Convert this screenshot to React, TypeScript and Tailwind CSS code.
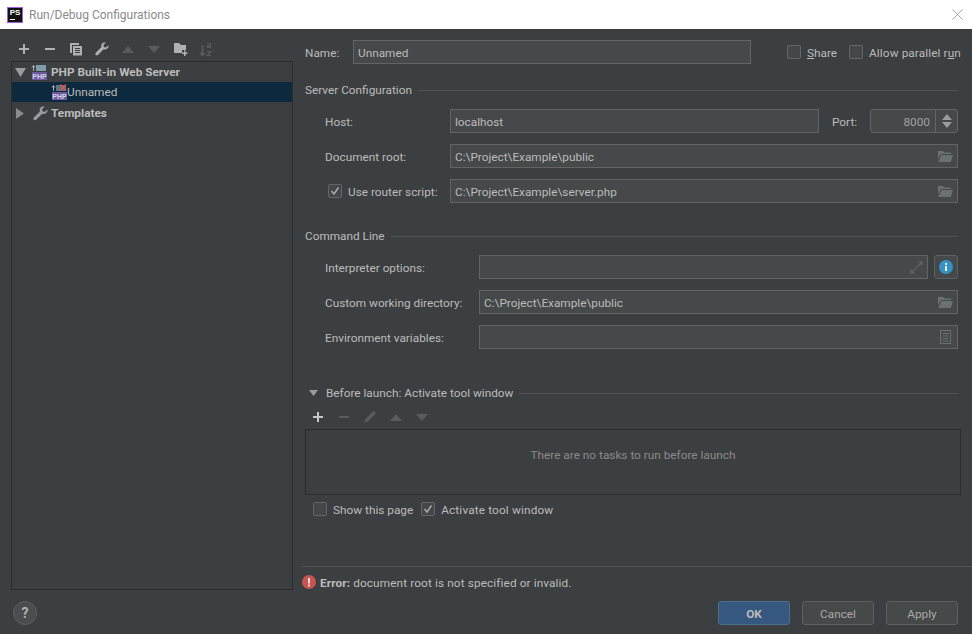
import type { ReactNode } from 'react'

const icon = '#afb1b3'
const dim = '#595c5e'

function Plus({ color = icon }: { color?: string }) {
  return (
    <svg width="12" height="12" viewBox="0 0 12 12"><path d="M5 1h2v4h4v2H7v4H5V7H1V5h4z" fill={color} /></svg>
  )
}

function Minus({ color = icon }: { color?: string }) {
  return (
    <svg width="12" height="12" viewBox="0 0 12 12"><rect x="1" y="5" width="10" height="2" fill={color} /></svg>
  )
}

function Copy() {
  return (
    <svg width="14" height="14" viewBox="0 0 14 14" fill="none">
      <path d="M1 1h9v2H3v8H1z" fill={icon} />
      <path d="M4 4h9v9.500H4z" fill={icon} />
      <path d="M6 6.500h5M6 8.500h5M6 10.500h5" stroke="#3c3f41" strokeWidth="1" />
    </svg>
  )
}

function Wrench({ size = 14, color = icon }: { size?: number; color?: string }) {
  return (
    <svg width={size} height={size} viewBox="0 0 14 14">
      <path d="M13.500 3.200l-2.600 2.300-2-.5-.5-2L11 .6C9.500.1 7.800.500 6.900 1.700 6.100 2.800 6 4 6.500 5.100L.8 10.800c-.6.600-.6 1.500 0 2.100.6.600 1.500.6 2.100 0l5.700-5.700c1.200.5 2.500.3 3.600-.6 1.200-1 1.500-2.100 1.300-3.400z" fill={color} />
    </svg>
  )
}

function Triangle({ up, color = dim }: { up?: boolean; color?: string }) {
  return (
    <svg width="12" height="7" viewBox="0 0 12 7">
      <path d={up ? 'M6 0l6 7H0z' : 'M0 0h12L6 7z'} fill={color} />
    </svg>
  )
}

function NewFolder() {
  return (
    <svg width="15" height="14" viewBox="0 0 15 14">
      <path d="M1 1h5l2 2h5v5H9v3H1z" fill={icon} />
      <path d="M11 8.500h1.500v2h2V12h-2v2H11v-2H9v-1.500h2z" fill={icon} />
    </svg>
  )
}

function Sort() {
  return (
    <svg width="14" height="15" viewBox="0 0 14 15" fill="none">
      <path d="M3.500 3v10M1 10.500l2.500 3 2.500-3" stroke={dim} strokeWidth="1.500" />
      <path d="M8 1.500h3.500v4H8.500V3.800h3M8 9.500h4l-4 4h4" stroke={dim} strokeWidth="1.200" />
    </svg>
  )
}

function PhpIcon({ broken }: { broken?: boolean }) {
  return (
    <svg width="16" height="16" viewBox="0 0 16 16" className="shrink-0">
      <path d="M2.500 7V2M1 3.500l1.500-2 1.500 2" stroke="#afb1b3" fill="none" strokeWidth="1" />
      <rect x="5" y="1" width="10" height="6" fill={broken ? '#5f7580' : '#7f9ca8'} />
      <rect x="1" y="8" width="15" height="8" fill="#6a5a9c" />
      <text x="8.500" y="14.700" textAnchor="middle" fontSize="7" fontWeight="700" fontFamily="Liberation Sans, sans-serif" fill="#d6d3e8">PHP</text>
      {broken && <path d="M9.500 0.500l5.500 6M15 0.500l-5.500 6" stroke="#d9534f" strokeWidth="1.500" />}
    </svg>
  )
}

function FolderOpen() {
  return (
    <svg width="15" height="13" viewBox="0 0 15 13">
      <path d="M0 1h5l1.500 1.500H13V4H3L0 9z" fill="#6b7072" />
      <path d="M3.500 5H15l-2.200 7H0z" fill="#6b7072" />
    </svg>
  )
}

function Expand() {
  return (
    <svg width="13" height="13" viewBox="0 0 13 13" fill="none">
      <path d="M7 6l5-5M8.500 1H12v3.500" stroke="#5f6364" strokeWidth="1.500" />
      <path d="M6 7l-5 5M1 8.500V12h3.500" stroke="#5f6364" strokeWidth="1.500" />
    </svg>
  )
}

function Note() {
  return (
    <svg width="11" height="14" viewBox="0 0 11 14" fill="none" className="mr-[2px]">
      <rect x="0.500" y="0.500" width="10" height="13" stroke="#6b7072" />
      <path d="M2.500 3.500h6M2.500 6h6M2.500 8.500h6M2.500 11h6" stroke="#6b7072" />
    </svg>
  )
}

function Check({ checked, className = '' }: { checked?: boolean; className?: string }) {
  return (
    <div className={`flex h-[14px] w-[14px] shrink-0 items-center justify-center rounded-[2px] border border-[#636566] bg-[#43474a] ${className}`}>
      {checked && (
        <svg width="10" height="10" viewBox="0 0 10 10" fill="none">
          <path d="M1.500 5l2.500 3L8.500 1.500" stroke="#a9abad" strokeWidth="1.500" />
        </svg>
      )}
    </div>
  )
}

function Field({ value, children, className = '' }: { value?: string; children?: ReactNode; className?: string }) {
  return (
    <div className={`flex h-[24px] shrink-0 items-center justify-between border border-[#646464] bg-[#45494a] pl-[4px] pr-[4px] ${className}`}>
      <span className="text-[#bbbbbb]">{value}</span>
      {children}
    </div>
  )
}

function Heading({ title, className = '' }: { title: string; className?: string }) {
  return (
    <div className={`flex h-[16px] items-center gap-[6px] ${className}`}>
      <div>{title}</div>
      <div className="h-px flex-1 bg-[#505254]" />
    </div>
  )
}

function Button({ label, primary }: { label: string; primary?: boolean }) {
  return (
    <div
      className={`flex h-[24px] w-[72px] items-center justify-center rounded-[3px] border pt-[2px] ${
        primary
          ? 'border-[#4c708c] bg-[#365880] font-bold text-[#bbbbbb]'
          : 'border-[#5e6060] bg-[#45494a] text-[#a9a9a9]'
      }`}
    >
      {label}
    </div>
  )
}

export default function App() {
  return (
    <div className="flex h-[634px] w-[972px] flex-col overflow-hidden bg-[#3c3f41] font-['Roboto','Noto_Sans',sans-serif] text-[11.8px] leading-[16px] text-[#bbbbbb] [&_span]:pt-[2px]">
      {/* Title bar */}
      <div className="flex h-[29px] shrink-0 items-center justify-between bg-white pl-[7px] pr-[9px]">
        <div className="flex items-center gap-[6px]">
          <div className="relative flex h-[16px] w-[16px] items-start justify-center border border-[#a05fe0] bg-[#111111] font-['Liberation_Sans',sans-serif] text-[8px] font-bold leading-[10px] text-white">
            PS
            <div className="absolute bottom-[2px] left-[2px] h-px w-[5px] bg-white" />
          </div>
          <div className="text-[12px] text-[#8a8a8a]">Run/Debug Configurations</div>
        </div>
        <svg width="11" height="11" viewBox="0 0 11 11" fill="none">
          <path d="M.5.500l10 10M10.500.500l-10 10" stroke="#8c8c8c" strokeWidth="0.800" />
        </svg>
      </div>

      <div className="flex min-h-0 flex-1">
        {/* Left: toolbar + tree */}
        <div className="flex w-[301px] shrink-0 flex-col pl-[11px]">
          <div className="flex h-[32px] shrink-0 items-center pt-[8px]">
            {[<Plus />, <Minus />, <Copy />, <Wrench />, <Triangle up />, <Triangle />, <NewFolder />, <Sort />].map((ic, i) => (
              <div key={i} className="flex w-[26px] justify-center">{ic}</div>
            ))}
          </div>
          <div className="h-[529px] w-[282px] border border-[#2b2b2b] font-bold">
            <div className="flex h-[20px] items-center">
              <div className="ml-[3px] mr-[5px] w-[11px]">
                <svg width="11" height="9" viewBox="0 0 11 9"><path d="M0 0h11L5.500 9z" fill="#9a9c9e" /></svg>
              </div>
              <PhpIcon />
              <div className="ml-[4px]">PHP Built-in Web Server</div>
            </div>
            <div className="flex h-[20px] items-center bg-[#0d293e] pl-[39px] font-normal">
              <PhpIcon broken />
              <div>Unnamed</div>
            </div>
            <div className="mt-[1px] flex h-[20px] items-center">
              <div className="ml-[4px] mr-[5px] w-[10px]">
                <svg width="8" height="11" viewBox="0 0 8 11"><path d="M0 0l8 5.500L0 11z" fill="#8a8c8e" /></svg>
              </div>
              <div className="ml-[2px] mr-[3px]"><Wrench size={15} color="#9a9c9e" /></div>
              <div>Templates</div>
            </div>
          </div>
        </div>

        {/* Right: form */}
        <div className="flex min-w-0 flex-1 flex-col pl-[4px] pr-[14px]">
          <div className="mt-[11px] flex h-[24px] items-center">
            <span className="w-[48px] shrink-0">Name:</span>
            <Field value="Unnamed" className="w-[398px]" />
            <Check className="ml-[36px]" />
            <span className="ml-[6px]"><u>S</u>hare</span>
            <Check className="ml-[12px]" />
            <span className="ml-[6px] whitespace-nowrap tracking-[0.1px]">Allow parallel r<u>u</u>n</span>
          </div>

          <Heading title="Server Configuration" className="mt-[18px]" />
          <div className="mt-[11px] flex flex-col gap-[11px] pl-[20px]">
            <div className="flex items-center">
              <span className="w-[125px]">Host:</span>
              <Field value="localhost" className="w-[369px]" />
              <span className="ml-[13px] w-[38px]">Port:</span>
              <div className="flex h-[24px] w-[88px] items-center rounded-[3px] border border-[#646464] bg-[#45494a]">
                <span className="flex-1 pr-[5px] text-right text-[#a0a0a0]">8000</span>
                <div className="flex h-full w-[22px] flex-col items-center justify-center gap-[2px] border-l border-[#646464]">
                  <svg width="10" height="6" viewBox="0 0 10 6"><path d="M5 0l5 6H0z" fill="#9a9c9e" /></svg>
                  <svg width="10" height="6" viewBox="0 0 10 6"><path d="M0 0h10L5 6z" fill="#9a9c9e" /></svg>
                </div>
              </div>
            </div>
            <div className="flex items-center">
              <span className="w-[125px]">Document root:</span>
              <Field value="C:\Project\Example\public" className="flex-1"><FolderOpen /></Field>
            </div>
            <div className="flex items-center">
              <Check checked className="ml-[3px]" />
              <span className="ml-[6px] w-[102px]">Use router script:</span>
              <Field value="C:\Project\Example\server.php" className="flex-1"><FolderOpen /></Field>
            </div>
          </div>

          <Heading title="Command Line" className="mt-[25px]" />
          <div className="mt-[11px] flex flex-col gap-[11px] pl-[20px]">
            <div className="flex items-center">
              <span className="w-[154px]">Interpreter options:</span>
              <Field className="flex-1"><Expand /></Field>
              <div className="ml-[6px] flex h-[24px] w-[24px] items-center justify-center rounded-[3px] border border-[#5e6060] bg-[#45494a]">
                <svg width="14" height="14" viewBox="0 0 14 14">
                  <circle cx="7" cy="7" r="7" fill="#3592c4" />
                  <rect x="6" y="6" width="2" height="5" fill="#e8eef2" />
                  <rect x="6" y="3" width="2" height="2" fill="#e8eef2" />
                </svg>
              </div>
            </div>
            <div className="flex items-center">
              <span className="w-[154px]">Custom working directory:</span>
              <Field value="C:\Project\Example\public" className="flex-1"><FolderOpen /></Field>
            </div>
            <div className="flex items-center">
              <span className="w-[154px]">Environment variables:</span>
              <Field className="flex-1"><Note /></Field>
            </div>
          </div>

          <div className="mt-[36px] flex h-[16px] items-center">
            <svg width="9" height="6" viewBox="0 0 9 6" className="ml-[4px]"><path d="M0 0h9L4.500 6z" fill="#9a9c9e" /></svg>
            <div className="ml-[8px]">Before launch: Activate tool window</div>
            <div className="ml-[6px] h-px flex-1 bg-[#505254]" />
          </div>
          <div className="mt-[10px] flex h-[12px] items-center">
            {[<Plus color="#c4c6c8" />, <Minus color={dim} />].map((ic, i) => (
              <div key={i} className="flex w-[26px] justify-center">{ic}</div>
            ))}
            <div className="flex w-[26px] justify-center">
              <svg width="14" height="14" viewBox="0 0 14 14"><path d="M10.500 1l2.500 2.500-8 8L1 13l1.500-4z" fill={dim} /></svg>
            </div>
            <div className="flex w-[26px] justify-center"><Triangle up /></div>
            <div className="flex w-[26px] justify-center"><Triangle /></div>
          </div>
          <div className="mt-[6px] mr-[-3px] flex h-[66px] shrink-0 items-center justify-center border border-[#2b2b2b] pb-[14px] text-[#8a8a8a]">
            There are no tasks to run before launch
          </div>
          <div className="mt-[7px] flex h-[14px] items-center pl-[8px]">
            <Check />
            <span className="ml-[6px]">Show this page</span>
            <Check checked className="ml-[8px]" />
            <span className="ml-[6px] tracking-[0.15px]">Activate tool window</span>
          </div>

          <div className="mt-[50px] ml-[-4px] mr-[-14px] h-px shrink-0 bg-[#505254]" />
          <div className="mt-[7px] flex h-[16px] items-center">
            <svg width="14" height="14" viewBox="0 0 14 14" className="ml-[-3px]">
              <circle cx="7" cy="7" r="7" fill="#c75450" />
              <rect x="6" y="3" width="2" height="5.500" fill="#f2dede" />
              <rect x="6" y="9.500" width="2" height="2" fill="#f2dede" />
            </svg>
            <span className="ml-[4px] tracking-[0.12px]"><b>Error:</b> document root is not specified or invalid.</span>
          </div>
        </div>
      </div>

      {/* Footer */}
      <div className="flex h-[33px] shrink-0 items-start justify-between pl-[13px] pr-[14px]">
        <div className="flex h-[24px] w-[24px] items-center justify-center rounded-full border border-[#5e6060] bg-[#4a4d4f] text-[14px] font-bold text-[#b0b0b0]">?</div>
        <div className="flex gap-[12px]">
          <Button label="OK" primary />
          <Button label="Cancel" />
          <Button label="Apply" />
        </div>
      </div>
    </div>
  )
}
